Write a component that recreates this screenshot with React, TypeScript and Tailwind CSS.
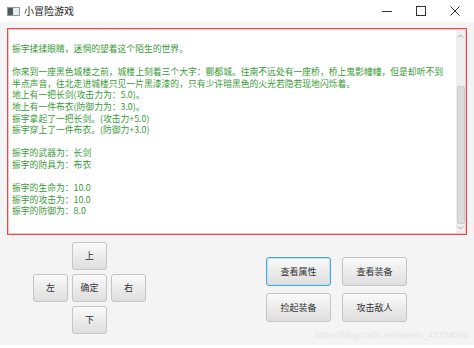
import React from "react";

const lines = [
  "振宇揉揉眼睛，迷惘的望着这个陌生的世界。",
  "",
  "你来到一座黑色城楼之前，城楼上刻着三个大字：酆都城。往南不远处有一座桥，桥上鬼影幢幢，但是却听不到",
  "半点声音，往北走进城楼只见一片黑漆漆的，只有少许暗黑色的火光若隐若现地闪烁着。",
  "地上有一把长剑(攻击力为：5.0)。",
  "地上有一件布衣(防御力为：3.0)。",
  "振宇拿起了一把长剑。(攻击力+5.0)",
  "振宇穿上了一件布衣。(防御力+3.0)",
  "",
  "振宇的武器为：长剑",
  "振宇的防具为：布衣",
  "",
  "振宇的生命为：10.0",
  "振宇的攻击为：10.0",
  "振宇的防御为：8.0",
];

function Btn({ label, w, h, focused }: { label: string; w: string; h: string; focused?: boolean }) {
  return (
    <button
      className={`${w} ${h} flex items-center justify-center rounded-[3px] border bg-gradient-to-b from-[#fafafa] to-[#dedede] text-[9px] text-[#333] ${
        focused ? "border-[#4aa7d9] shadow-[inset_0_0_0_1px_#bfe2f4]" : "border-[#c4c4c4]"
      }`}
    >
      {label}
    </button>
  );
}

export default function App() {
  return (
    <div className="relative w-[474px] h-[348px] bg-white overflow-hidden font-['Noto_Sans_CJK_SC',sans-serif]">
      {/* title bar */}
      <div className="h-[22px] flex items-center">
        <svg width="13" height="9" viewBox="0 0 13 9" className="ml-[7px]">
          <rect x="0.5" y="0.5" width="12" height="8" fill="#e6eeee" stroke="#8a9a9a" />
          <rect x="1" y="1" width="5" height="7" fill="#4f5a5a" />
        </svg>
        <span className="ml-[4px] text-[10px] text-[#222] leading-none">小冒险游戏</span>
        <div className="ml-auto flex items-center">
          <svg width="12" height="12" viewBox="0 0 12 12" className="mr-[22px]">
            <line x1="1" y1="6.5" x2="11" y2="6.5" stroke="#333" strokeWidth="1" />
          </svg>
          <svg width="12" height="12" viewBox="0 0 12 12" className="mr-[22px]">
            <rect x="1.5" y="1.5" width="9" height="9" fill="none" stroke="#333" strokeWidth="1" />
          </svg>
          <svg width="12" height="12" viewBox="0 0 12 12" className="mr-[13px]">
            <path d="M1.5 1.5 L10.5 10.5 M10.5 1.5 L1.5 10.5" stroke="#333" strokeWidth="1" />
          </svg>
        </div>
      </div>

      {/* window body */}
      <div className="h-[323px] bg-[#f4f4f4] pt-[6px]">
        {/* text area */}
        <div className="ml-[7px] w-[460px] h-[207px] border border-[#e24c4c] shadow-[inset_0_0_0_1px_#f6c4c4] bg-white flex">
          <div className="flex-1 pl-[4px] pt-[14px] text-[8.8px] leading-[11.6px] text-[#379a37] whitespace-nowrap">
            {lines.map((l, i) => (
              <div key={i} className="h-[11.6px]">
                {l}
              </div>
            ))}
          </div>
          <div className="w-[9px] my-[1px] mr-[1px] bg-[#efefef] flex flex-col items-center">
            <svg width="7" height="7" viewBox="0 0 7 7" className="mt-[3px]">
              <path d="M1 4.5 L3.5 2 L6 4.5" fill="none" stroke="#9a9a9a" strokeWidth="1" />
            </svg>
            <div className="mt-[46px] w-[8px] h-[139px] bg-[#dcdcdc] border border-[#cdcdcd] rounded-[2px]" />
            <svg width="7" height="7" viewBox="0 0 7 7" className="mt-auto mb-[2px]">
              <path d="M1 2.5 L3.5 5 L6 2.5" fill="none" stroke="#9a9a9a" strokeWidth="1" />
            </svg>
          </div>
        </div>

        {/* controls */}
        <div className="flex items-start">
          <div className="ml-[33px] mt-[7px] grid grid-cols-[35px_35px_35px] grid-rows-[28px_28px_28px] gap-x-[4px] gap-y-[4px]">
            <div />
            <Btn label="上" w="w-[35px]" h="h-[28px]" />
            <div />
            <Btn label="左" w="w-[35px]" h="h-[28px]" />
            <Btn label="确定" w="w-[35px]" h="h-[28px]" />
            <Btn label="右" w="w-[35px]" h="h-[28px]" />
            <div />
            <Btn label="下" w="w-[35px]" h="h-[28px]" />
            <div />
          </div>
          <div className="ml-[120px] mt-[22px] grid grid-cols-[65px_65px] gap-x-[11px] gap-y-[7px]">
            <Btn label="查看属性" w="w-[65px]" h="h-[29px]" focused />
            <Btn label="查看装备" w="w-[65px]" h="h-[29px]" />
            <Btn label="捡起装备" w="w-[65px]" h="h-[29px]" />
            <Btn label="攻击敌人" w="w-[65px]" h="h-[29px]" />
          </div>
        </div>
      </div>

      {/* watermark */}
      <div className="absolute right-[6px] bottom-[6px] text-[9px] text-[#e4e4e4] font-['Liberation_Sans',sans-serif]">
        https://blog.csdn.net/weixin_43734095
      </div>
    </div>
  );
}
